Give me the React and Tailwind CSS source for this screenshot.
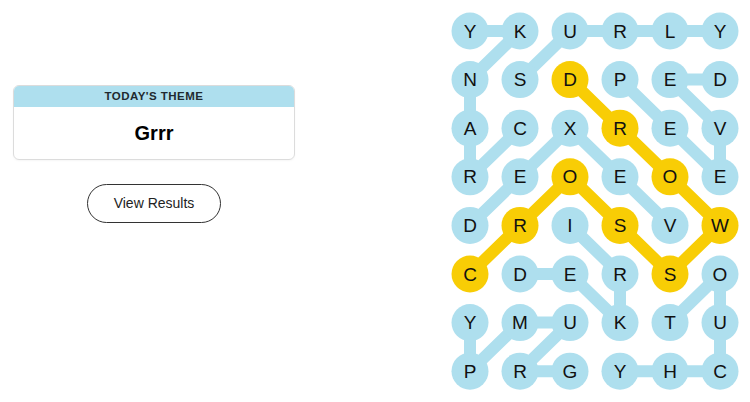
import React from "react";

const BLUE = "#aedfee";
const YELLOW = "#f8cd05";

const LETTERS = [
  "YKURLY",
  "NSDPED",
  "ACXREV",
  "REOEOE",
  "DRISVW",
  "CDERSO",
  "YMUKTU",
  "PRGYHC",
];

// found words as [row, col] paths
const WORDS = [
  [[2, 1], [3, 0], [2, 0], [1, 0], [0, 1], [0, 0]], // CRANKY
  [[1, 1], [0, 2], [0, 3], [0, 4], [0, 5]], // SURLY
  [[1, 3], [2, 4], [3, 5], [2, 5], [1, 4], [1, 5]], // PEEVED
  [[4, 4], [3, 3], [2, 2], [3, 1], [4, 0]], // VEXED
  [[4, 2], [5, 3], [6, 3], [5, 2], [5, 1]], // IRKED
  [[7, 2], [7, 1], [6, 2], [6, 1], [7, 0], [6, 0]], // GRUMPY
  [[6, 4], [5, 5], [6, 5], [7, 5], [7, 4], [7, 3]], // TOUCHY
];

const SPANGRAM = [[5, 0], [4, 1], [3, 2], [4, 3], [5, 4], [4, 5], [3, 4], [2, 3], [1, 2]];

const cx = (c) => 25 + c * 50;
const cy = (r) => 31 + r * 48.6;

function isSpan(r, c) {
  return SPANGRAM.some(([a, b]) => a === r && b === c);
}

function Board() {
  const links = (path, color, key) =>
    path.slice(1).map(([r, c], i) => {
      const [pr, pc] = path[i];
      return (
        <line
          key={`${key}-${i}`}
          x1={cx(pc)}
          y1={cy(pr)}
          x2={cx(c)}
          y2={cy(r)}
          stroke={color}
          strokeWidth="12"
          strokeLinecap="round"
        />
      );
    });

  return (
    <svg width="300" height="402" viewBox="0 0 300 402" className="shrink-0">
      {WORDS.map((w, i) => links(w, BLUE, `w${i}`))}
      {links(SPANGRAM, YELLOW, "s")}
      {LETTERS.map((row, r) =>
        row.split("").map((ch, c) => (
          <g key={`${r}-${c}`}>
            <circle cx={cx(c)} cy={cy(r)} r="18.5" fill={isSpan(r, c) ? YELLOW : BLUE} />
            <text
              x={cx(c)}
              y={cy(r) + 6.5}
              textAnchor="middle"
              fontSize="19"
              fill="#111"
              style={{ fontFamily: '"Liberation Sans", Arial, sans-serif' }}
            >
              {ch}
            </text>
          </g>
        ))
      )}
    </svg>
  );
}

export default function App() {
  return (
    <div className="w-[750px] h-[402px] bg-white flex overflow-hidden font-['Liberation_Sans',Arial,sans-serif]">
      <div className="w-[445px] shrink-0 pl-[13px] pt-[85px]">
        <div className="w-[282px] rounded-md border border-[#dcdcdc] overflow-hidden shadow-[0_1px_2px_rgba(0,0,0,0.04)]">
          <div className="h-[21px] bg-[#aedfee] flex items-center justify-center">
            <span className="text-[11.5px] font-bold tracking-[0.04em] text-[#1f2a30]">
              TODAY'S THEME
            </span>
          </div>
          <div className="h-[52px] flex items-center justify-center">
            <span className="text-[20px] font-bold text-black">Grrr</span>
          </div>
        </div>
        <div className="w-[282px] flex justify-center mt-[24px]">
          <button className="h-[39px] w-[134px] rounded-full border border-[#333] text-[14px] text-[#222] bg-white">
            View Results
          </button>
        </div>
      </div>
      <Board />
    </div>
  );
}
